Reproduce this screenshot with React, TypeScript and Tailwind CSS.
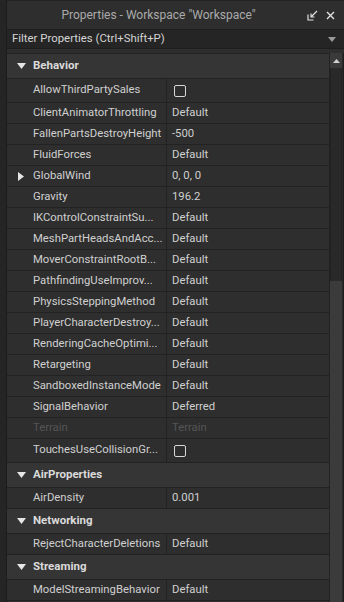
import React from 'react';

type Row =
  | { kind: 'header'; name: string }
  | { kind: 'prop'; name: string; value?: string; check?: boolean; expand?: boolean; disabled?: boolean };

const rows: Row[] = [
  { kind: 'header', name: 'Behavior' },
  { kind: 'prop', name: 'AllowThirdPartySales', check: true },
  { kind: 'prop', name: 'ClientAnimatorThrottling', value: 'Default' },
  { kind: 'prop', name: 'FallenPartsDestroyHeight', value: '-500' },
  { kind: 'prop', name: 'FluidForces', value: 'Default' },
  { kind: 'prop', name: 'GlobalWind', value: '0, 0, 0', expand: true },
  { kind: 'prop', name: 'Gravity', value: '196.2' },
  { kind: 'prop', name: 'IKControlConstraintSu...', value: 'Default' },
  { kind: 'prop', name: 'MeshPartHeadsAndAcc...', value: 'Default' },
  { kind: 'prop', name: 'MoverConstraintRootB...', value: 'Default' },
  { kind: 'prop', name: 'PathfindingUseImprov...', value: 'Default' },
  { kind: 'prop', name: 'PhysicsSteppingMethod', value: 'Default' },
  { kind: 'prop', name: 'PlayerCharacterDestroy...', value: 'Default' },
  { kind: 'prop', name: 'RenderingCacheOptimi...', value: 'Default' },
  { kind: 'prop', name: 'Retargeting', value: 'Default' },
  { kind: 'prop', name: 'SandboxedInstanceMode', value: 'Default' },
  { kind: 'prop', name: 'SignalBehavior', value: 'Deferred' },
  { kind: 'prop', name: 'Terrain', value: 'Terrain', disabled: true },
  { kind: 'prop', name: 'TouchesUseCollisionGr...', check: true },
  { kind: 'header', name: 'AirProperties' },
  { kind: 'prop', name: 'AirDensity', value: '0.001' },
  { kind: 'header', name: 'Networking' },
  { kind: 'prop', name: 'RejectCharacterDeletions', value: 'Default' },
  { kind: 'header', name: 'Streaming' },
  { kind: 'prop', name: 'ModelStreamingBehavior', value: 'Default' },
];

const DownTri = () => (
  <svg width="9" height="6" viewBox="0 0 9 6"><path d="M0 0h9L4.5 6z" fill="#e6e6e6" /></svg>
);

const RightTri = () => (
  <svg width="6" height="9" viewBox="0 0 6 9"><path d="M0 0v9l6-4.5z" fill="#e6e6e6" /></svg>
);

export default function App() {
  return (
    <div
      className="w-[344px] h-[602px] overflow-hidden bg-[#232323] flex text-[#d0d0d0]"
      style={{ fontFamily: 'Roboto, "Noto Sans", sans-serif' }}
    >
      <div className="w-[7px] shrink-0 bg-[#252525] border-r border-[#1b1b1b]" />
      <div className="flex-1 flex flex-col bg-[#2e2e2e]">
        {/* title */}
        <div className="h-[29px] shrink-0 flex items-center relative border-t border-[#222]">
          <div className="flex-1 text-center text-[12px] text-[#aaaaaa] pr-[34px]">
            Properties - Workspace "Workspace"
          </div>
          <div className="absolute right-[9px] top-[9px] flex items-center gap-[8px]">
            <svg width="11" height="11" viewBox="0 0 11 11" fill="none" stroke="#e0e0e0" strokeWidth="1.2">
              <path d="M1 4.5v5.5h5.5" />
              <path d="M10 1L4 7M4 3.5V7h3.5" />
            </svg>
            <svg width="9" height="9" viewBox="0 0 9 9" stroke="#e0e0e0" strokeWidth="1.4">
              <path d="M1 1l7 7M8 1L1 8" />
            </svg>
          </div>
        </div>
        {/* filter */}
        <div className="h-[20px] shrink-0 flex items-center bg-[#252525] border-y border-[#1e1e1e] px-[5px]">
          <span className="flex-1 text-[11.4px] text-[#d4d4d4]">Filter Properties (Ctrl+Shift+P)</span>
          <svg width="8" height="5" viewBox="0 0 8 5" className="mr-[3px]"><path d="M0 0h8L4 5z" fill="#9a9a9a" /></svg>
        </div>
        <div className="h-[4px] shrink-0" />
        <div className="flex-1 flex min-h-0">
          <div className="flex-1 flex flex-col overflow-hidden border-t border-[#222]">
            {rows.map((r, i) =>
              r.kind === 'header' ? (
                <div key={i} className="h-[25px] shrink-0 flex items-center bg-[#353535] border-b border-[#222]">
                  <div className="w-[26px] flex justify-center pl-[2px]"><DownTri /></div>
                  <span className="text-[11.5px] font-bold text-[#dadada]">{r.name}</span>
                </div>
              ) : (
                <div
                  key={i}
                  className={`${r.check ? 'h-[24px]' : 'h-[21px]'} shrink-0 flex items-center border-b border-[#222] ${
                    r.disabled ? 'text-[#555555]' : 'text-[#d0d0d0]'
                  }`}
                >
                  <div className="w-[160px] h-full flex items-center border-r border-[#222] shrink-0">
                    <div className="w-[26px] flex justify-center pl-[2px] shrink-0">{r.expand && <RightTri />}</div>
                    <span className="text-[11.3px] whitespace-nowrap">{r.name}</span>
                  </div>
                  <div className="pl-[5px] text-[11.3px]">
                    {r.check ? (
                      <div className="w-[12px] h-[12px] ml-[2px] border border-[#d8d8d8] rounded-[2px]" />
                    ) : (
                      r.value
                    )}
                  </div>
                </div>
              )
            )}
          </div>
          {/* scrollbar */}
          <div className="w-[14px] shrink-0 flex flex-col bg-[#292929] border-l border-[#222] pr-[1px]">
            <div className="h-[15px] shrink-0 bg-[#3a3a3a] flex items-center justify-center">
              <svg width="7" height="4" viewBox="0 0 7 4"><path d="M0 4h7L3.5 0z" fill="#cfcfcf" /></svg>
            </div>
            <div className="h-[213px] shrink-0 border-x border-[#222]" />
            <div className="flex-1 bg-[#3b3b3b]" />
          </div>
          <div className="w-[1px] shrink-0 bg-[#1e1e1e]" />
        </div>
      </div>
    </div>
  );
}
